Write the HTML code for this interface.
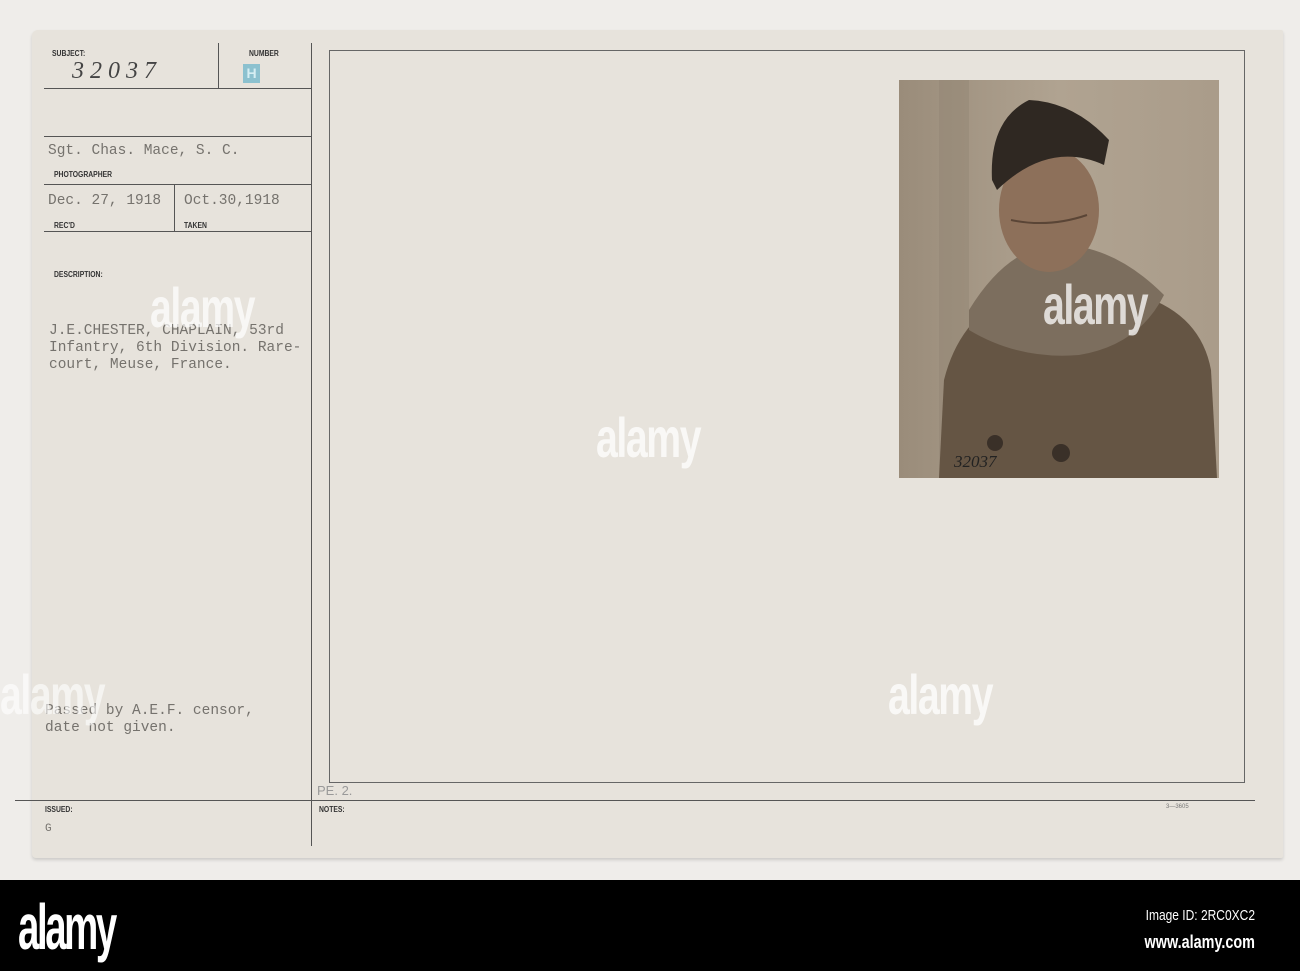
<!DOCTYPE html>
<html><head><meta charset="utf-8"><style>
*{margin:0;padding:0;box-sizing:border-box}
body{width:1300px;height:971px;background:#efedea;position:relative;overflow:hidden;font-family:"Liberation Sans",sans-serif}
.card{position:absolute;left:32px;top:30px;width:1251px;height:828px;background:#e7e3dc;border-radius:6px 2px 2px 4px;box-shadow:0 2px 3px rgba(0,0,0,.15)}
.l{position:absolute;background:#555}
.lab{position:absolute;font-family:"Liberation Sans",sans-serif;font-weight:bold;font-size:8px;color:#333;transform:scaleX(.85);transform-origin:left}
.tw{position:absolute;font-family:"Liberation Mono",monospace;font-size:14.5px;color:#75726d;white-space:pre;line-height:17px}
.wm{position:absolute;color:rgba(255,255,255,.75);font-weight:bold;font-family:"Liberation Sans",sans-serif;transform:scaleX(.7);transform-origin:left;letter-spacing:-2px}
.bar{position:absolute;left:0;top:880px;width:1300px;height:91px;background:#000}
</style></head><body>
<div class="card"></div>
<div class="l" style="left:44px;top:88px;width:267px;height:1px"></div>
<div class="l" style="left:44px;top:136px;width:267px;height:1px"></div>
<div class="l" style="left:44px;top:184px;width:267px;height:1px"></div>
<div class="l" style="left:44px;top:231px;width:267px;height:1px"></div>
<div class="l" style="left:218px;top:43px;width:1px;height:45px"></div>
<div class="l" style="left:174px;top:185px;width:1px;height:46px"></div>
<div class="l" style="left:311px;top:43px;width:1px;height:803px"></div>
<div class="l" style="left:329px;top:50px;width:1px;height:732px;background:#666"></div>
<div class="l" style="left:1244px;top:50px;width:1px;height:732px;background:#666"></div>
<div class="l" style="left:329px;top:50px;width:916px;height:1px;background:#666"></div>
<div class="l" style="left:329px;top:782px;width:916px;height:1px;background:#666"></div>
<div class="l" style="left:15px;top:800px;width:1240px;height:1px"></div>
<div class="lab" style="left:52px;top:49px">SUBJECT:</div>
<div class="lab" style="left:249px;top:49px">NUMBER</div>
<div class="lab" style="left:54px;top:170px">PHOTOGRAPHER</div>
<div class="lab" style="left:54px;top:221px">REC'D</div>
<div class="lab" style="left:184px;top:221px">TAKEN</div>
<div class="lab" style="left:54px;top:270px">DESCRIPTION:</div>
<div class="lab" style="left:45px;top:805px">ISSUED:</div>
<div class="lab" style="left:319px;top:805px">NOTES:</div>
<div style="position:absolute;left:1166px;top:804px;font-size:6px;color:#777">3—3605</div>
<div style="position:absolute;left:72px;top:58px;font-family:'Liberation Serif',serif;font-style:italic;font-size:24px;color:#444;letter-spacing:6px">32037</div>
<div style="position:absolute;left:243px;top:64px;width:17px;height:19px;background:#8cc1cf;color:#d6eef3;font-size:14px;font-weight:bold;text-align:center;line-height:19px">H</div>
<div class="tw" style="left:48px;top:143px">Sgt. Chas. Mace, S. C.</div>
<div class="tw" style="left:48px;top:193px">Dec. 27, 1918</div>
<div class="tw" style="left:184px;top:193px">Oct.30,1918</div>
<div class="tw" style="left:49px;top:323px">J.E.CHESTER, CHAPLAIN, 53rd
Infantry, 6th Division. Rare-
court, Meuse, France.</div>
<div class="tw" style="left:45px;top:703px">Passed by A.E.F. censor,
date not given.</div>
<div class="tw" style="left:45px;top:821px;font-size:11px">G</div>
<div style="position:absolute;left:317px;top:783px;font-family:'Liberation Sans',sans-serif;font-size:13px;color:#999">PE. 2.</div>
<svg style="position:absolute;left:899px;top:80px" width="320" height="398" viewBox="0 0 320 398">
<defs><linearGradient id="bg" x1="0" x2="1"><stop offset="0" stop-color="#9a8c7a"/><stop offset=".5" stop-color="#b0a391"/><stop offset="1" stop-color="#aa9c8a"/></linearGradient></defs>
<rect width="320" height="398" fill="url(#bg)"/>
<rect x="40" y="0" width="30" height="398" fill="#8f8170" opacity=".4"/>
<path d="M40 398 L45 300 Q60 240 110 215 L220 210 Q300 225 312 290 L318 398Z" fill="#655544"/>
<path d="M70 230 Q110 165 160 165 Q215 165 265 215 Q240 265 180 275 Q120 280 70 250Z" fill="#7c6e5e"/>
<ellipse cx="150" cy="130" rx="50" ry="62" fill="#8d705a"/>
<path d="M93 100 Q90 40 130 20 Q175 22 210 60 L205 85 Q150 60 98 110Z" fill="#2f2822"/>
<path d="M112 140 Q150 148 188 135" stroke="#5a4536" stroke-width="2" fill="none"/>
<circle cx="96" cy="363" r="8" fill="#3a3028"/><circle cx="162" cy="373" r="9" fill="#3a3028"/>
<text x="55" y="387" font-family="Liberation Serif,serif" font-style="italic" font-size="17" fill="#222">32037</text>
</svg>
<div class="wm" style="left:1043px;top:272px;font-size:56px">alamy</div>
<div class="wm" style="left:150px;top:275px;font-size:56px;color:rgba(255,255,255,.7)">alamy</div>
<div class="wm" style="left:596px;top:405px;font-size:56px">alamy</div>
<div class="wm" style="left:0px;top:662px;font-size:56px;color:rgba(255,255,255,.6)">alamy</div>
<div class="wm" style="left:888px;top:662px;font-size:56px">alamy</div>
<div class="bar"></div>
<div style="position:absolute;left:18px;top:890px;color:#fff;font-weight:bold;font-size:64px;transform:scaleX(.6);transform-origin:left;letter-spacing:-4px">alamy</div>
<div style="position:absolute;left:1105px;top:907px;color:#fff;font-size:15px;width:150px;text-align:right;transform:scaleX(.8);transform-origin:right">Image ID: 2RC0XC2</div>
<div style="position:absolute;left:1080px;top:932px;color:#fff;font-size:18px;font-weight:bold;width:175px;text-align:right;transform:scaleX(.8);transform-origin:right">www.alamy.com</div>
</body></html>
